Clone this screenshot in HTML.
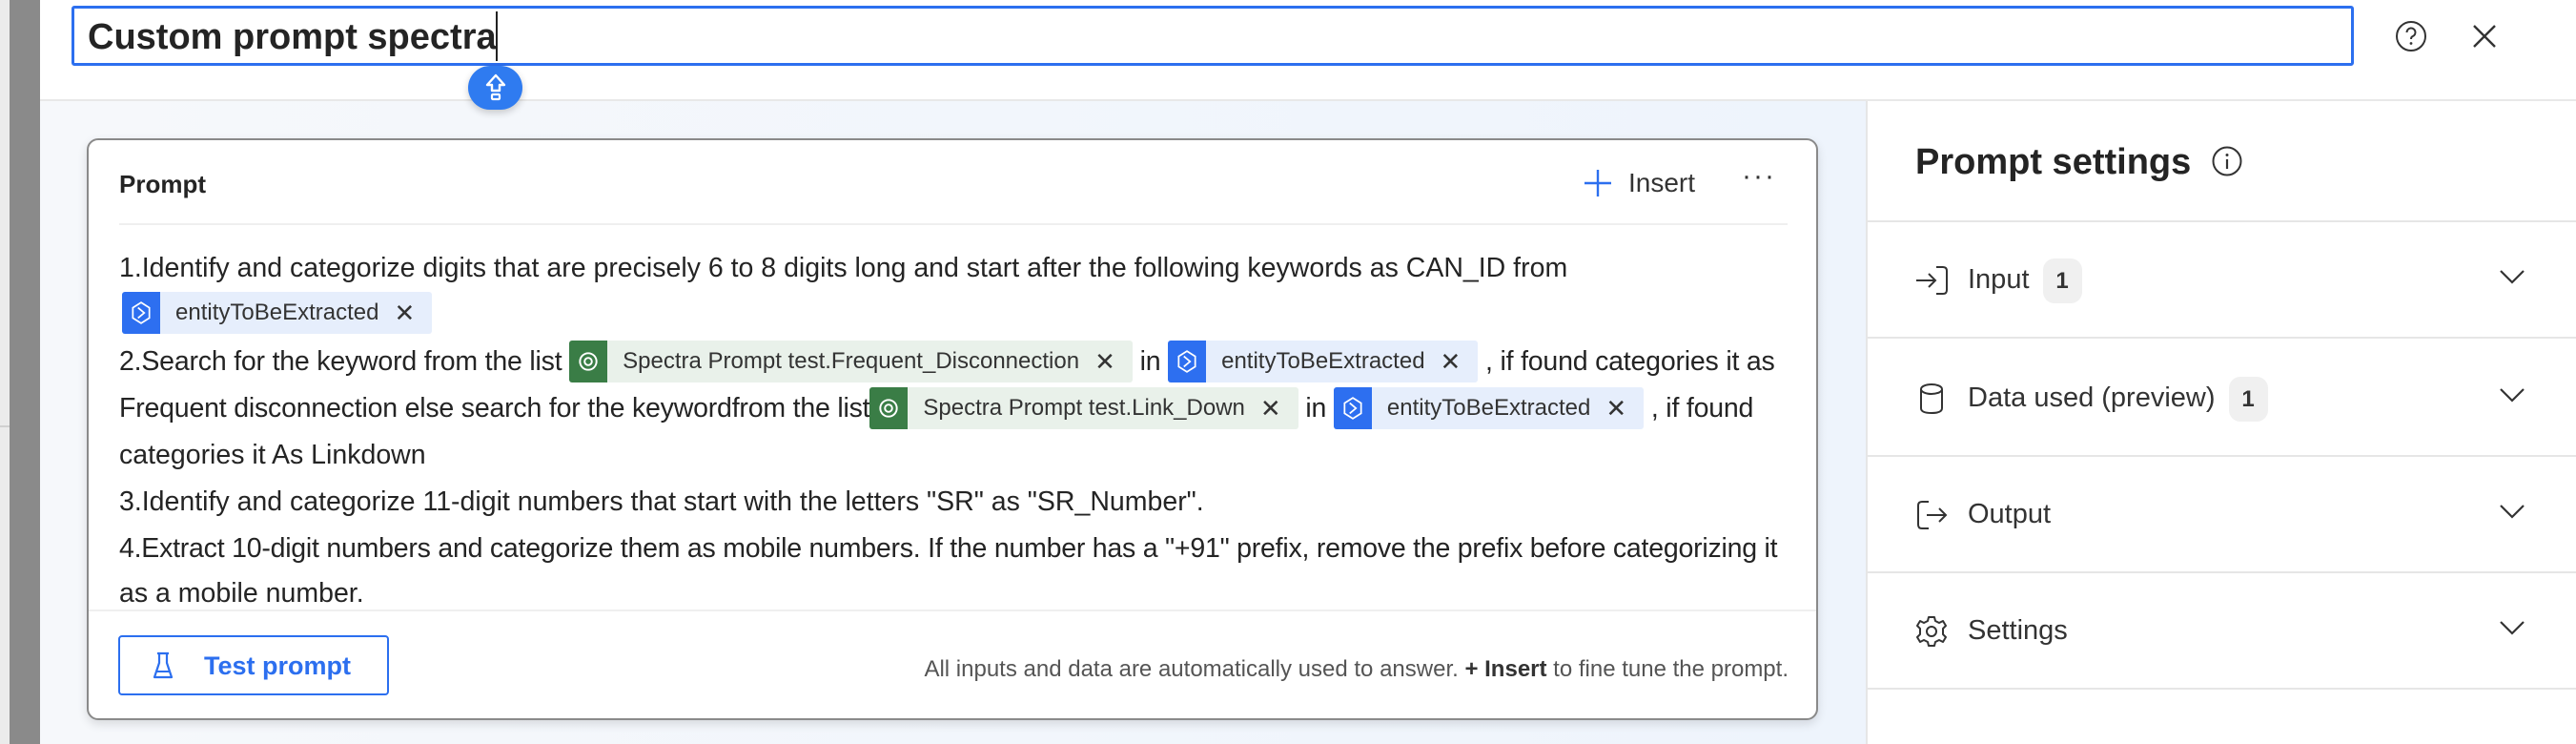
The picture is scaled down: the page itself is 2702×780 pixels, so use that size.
<!DOCTYPE html>
<html><head><meta charset="utf-8">
<style>
*{margin:0;padding:0;box-sizing:border-box}
body{width:2702px;height:780px;overflow:hidden;background:#fff;font-family:"Liberation Sans",sans-serif;color:#242424;position:relative}
.abs{position:absolute}
.line{position:absolute;left:125px;height:44px;line-height:44px;font-size:28.5px;white-space:nowrap;color:#242424}
.chip{display:inline-flex;align-items:center;height:44px;vertical-align:top;border-radius:3px;overflow:hidden;font-size:24px;letter-spacing:0}
.chip .ic{width:40px;height:44px;display:flex;align-items:center;justify-content:center}
.chip.b{background:#e6eefc}.chip.b .ic{background:#2d6ff0}
.chip.g{background:#e9f1ea}.chip.g .ic{background:#3a7d46}
.chip .t{padding:0 16px 0 16px;color:#333}
.chip .x{padding-right:18px;font-size:26px;color:#333}
.row{position:absolute;left:1957px;right:0;height:122px;border-bottom:2px solid #e6e6e6}
.row .lab{position:absolute;left:107px;top:0;line-height:120px;font-size:29px;color:#333}
.badge{display:inline-block;width:41px;height:47px;line-height:47px;text-align:center;background:#f0f0f0;border-radius:12px;font-weight:bold;font-size:24px;margin-left:14px;vertical-align:middle}
.row svg.ri{position:absolute;left:52px;top:44px}
.row svg.ch{position:absolute;left:664px;top:48px}
</style></head><body>
<div class="abs" style="left:0;top:0;width:10px;height:780px;background:#ebebeb"></div>
<div class="abs" style="left:0;top:446px;width:10px;height:2px;background:#d0d0d0"></div>
<div class="abs" style="left:10px;top:0;width:32px;height:780px;background:#8a8a8a"></div>
<div class="abs" style="left:42px;top:104px;width:2660px;height:2px;background:#e8e8e8"></div>
<div class="abs" style="left:75px;top:6px;width:2394px;height:63px;border:3px solid #2c6fef;border-radius:3px"></div>
<div class="abs" style="left:92px;top:14px;font-size:38px;font-weight:bold;line-height:50px;color:#242424">Custom prompt spectra</div>
<div class="abs" style="left:520px;top:12px;width:2px;height:52px;background:#222"></div>
<svg class="abs" style="left:2512px;top:21px" width="34" height="34" viewBox="0 0 34 34"><circle cx="17" cy="17" r="15" fill="none" stroke="#333" stroke-width="2"/><path d="M12.5 13a4.5 4.5 0 1 1 6 4.2c-1.2.5-1.5 1.3-1.5 2.8" fill="none" stroke="#333" stroke-width="2"/><circle cx="17" cy="24.5" r="1.4" fill="#333"/></svg>
<svg class="abs" style="left:2593px;top:25px" width="26" height="26" viewBox="0 0 26 26"><path d="M2 2L24 24M24 2L2 24" stroke="#333" stroke-width="2.4"/></svg>
<div class="abs" style="left:42px;top:106px;width:1915px;height:674px;background:linear-gradient(90deg,#f6f8fb,#eef4fc)"></div>
<div class="abs" style="left:491px;top:69px;width:57px;height:46px;background:#2f7bf0;border-radius:23px;box-shadow:0 3px 8px rgba(0,0,0,.2)"></div>
<svg class="abs" style="left:505px;top:75px" width="30" height="34" viewBox="0 0 30 34"><path d="M15 4L6 14h5v6h8v-6h5z" fill="none" stroke="#fff" stroke-width="2.4" stroke-linejoin="round"/><rect x="11" y="24" width="8" height="5" rx="1" fill="none" stroke="#fff" stroke-width="2.2"/></svg>
<div class="abs" style="left:91px;top:145px;width:1816px;height:610px;background:#fff;border:2px solid #8a8a8a;border-radius:12px;box-shadow:0 4px 10px rgba(0,0,0,.12)"></div>
<div class="abs" style="left:125px;top:176px;font-size:26px;font-weight:bold;line-height:34px">Prompt</div>
<div class="abs" style="left:125px;top:234px;width:1750px;height:2px;background:#efefef"></div>
<svg class="abs" style="left:1661px;top:177px" width="30" height="30" viewBox="0 0 30 30"><path d="M15 1V29M1 15H29" stroke="#2c6fef" stroke-width="2.4"/></svg>
<div class="abs" style="left:1708px;top:175px;font-size:28px;line-height:34px;color:#333">Insert</div>
<div class="abs" style="left:1827px;top:168px;font-size:30px;line-height:34px;color:#333;letter-spacing:2px">···</div>
<svg width="0" height="0" style="position:absolute"><defs>
<symbol id="bi" viewBox="0 0 24 24"><path d="M12 2L20 7V17L12 22L4 17V7Z" fill="none" stroke="#fff" stroke-width="1.6"/><path d="M9 7L15 12L9 17" fill="none" stroke="#fff" stroke-width="1.6"/></symbol>
<symbol id="gi" viewBox="0 0 24 24"><circle cx="12" cy="12" r="8" fill="none" stroke="#fff" stroke-width="1.8"/><circle cx="12" cy="12" r="3.5" fill="none" stroke="#fff" stroke-width="1.8"/></symbol>
</defs></svg>
<div class="line" style="top:259px">1.Identify and categorize digits that are precisely 6 to 8 digits long and start after the following keywords as CAN_ID from</div>
<div class="line" style="top:306px;left:128px"><span class="chip b"><span class="ic"><svg width="26" height="26"><use href="#bi"/></svg></span><span class="t">entityToBeExtracted</span><span class="x">✕</span></span></div>
<div class="line" style="top:357px;letter-spacing:-0.2px">2.Search for the keyword from the list <span class="chip g"><span class="ic"><svg width="26" height="26"><use href="#gi"/></svg></span><span class="t">Spectra Prompt test.Frequent_Disconnection</span><span class="x">✕</span></span> in <span class="chip b"><span class="ic"><svg width="26" height="26"><use href="#bi"/></svg></span><span class="t">entityToBeExtracted</span><span class="x">✕</span></span> , if found categories it as</div>
<div class="line" style="top:406px;letter-spacing:-0.2px">Frequent disconnection else search for the keywordfrom the list<span class="chip g"><span class="ic"><svg width="26" height="26"><use href="#gi"/></svg></span><span class="t">Spectra Prompt test.Link_Down</span><span class="x">✕</span></span> in <span class="chip b"><span class="ic"><svg width="26" height="26"><use href="#bi"/></svg></span><span class="t">entityToBeExtracted</span><span class="x">✕</span></span> , if found</div>
<div class="line" style="top:455px">categories it As Linkdown</div>
<div class="line" style="top:504px">3.Identify and categorize 11-digit numbers that start with the letters "SR" as "SR_Number".</div>
<div class="line" style="top:553px;letter-spacing:-0.23px">4.Extract 10-digit numbers and categorize them as mobile numbers. If the number has a "+91" prefix, remove the prefix before categorizing it</div>
<div class="line" style="top:600px">as a mobile number.</div>
<div class="abs" style="left:93px;top:639px;width:1812px;height:2px;background:#efefef"></div>
<div class="abs" style="left:124px;top:666px;width:284px;height:63px;border:2px solid #2c6fef;border-radius:4px"></div>
<svg class="abs" style="left:160px;top:683px" width="22" height="30" viewBox="0 0 22 30"><path d="M5 2H17M7 2V12L2 27H20L15 12V2" fill="none" stroke="#2c6fef" stroke-width="2.2" stroke-linejoin="round"/><path d="M4 21H18" stroke="#2c6fef" stroke-width="2"/></svg>
<div class="abs" style="left:214px;top:680px;font-size:27px;font-weight:bold;color:#2c6fef;line-height:36px">Test prompt</div>
<div class="abs" style="left:900px;top:687px;width:976px;text-align:right;font-size:24px;color:#555;line-height:30px;white-space:nowrap">All inputs and data are automatically used to answer. <b style="color:#333">+ Insert</b> to fine tune the prompt.</div>
<div class="abs" style="left:1957px;top:106px;width:2px;height:674px;background:#e6e6e6"></div>
<div class="abs" style="left:2009px;top:145px;font-size:38px;font-weight:bold;line-height:50px;color:#242424">Prompt settings</div>
<svg class="abs" style="left:2320px;top:153px" width="32" height="32" viewBox="0 0 32 32"><circle cx="16" cy="16" r="14.5" fill="none" stroke="#333" stroke-width="2"/><path d="M16 14V24" stroke="#333" stroke-width="2.2"/><circle cx="16" cy="9.5" r="1.5" fill="#333"/></svg>
<div class="abs" style="left:1959px;top:231px;width:743px;height:2px;background:#e6e6e6"></div>
<div class="row" style="top:233px"><svg class="ri" width="34" height="34" viewBox="0 0 34 34"><path d="M1 17H21M14 10L21 17L14 24" fill="none" stroke="#333" stroke-width="2"/><path d="M22 3H29Q33 3 33 7V27Q33 31 29 31H22" fill="none" stroke="#333" stroke-width="2"/></svg><div class="lab">Input<span class="badge">1</span></div><svg class="ch" width="28" height="18" viewBox="0 0 28 18"><path d="M2 3L14 15L26 3" fill="none" stroke="#333" stroke-width="2.2"/></svg></div>
<div class="row" style="top:357px"><svg class="ri" width="34" height="34" viewBox="0 0 34 34"><ellipse cx="17" cy="7" rx="11" ry="5" fill="none" stroke="#333" stroke-width="2"/><path d="M6 7V27Q6 32 17 32Q28 32 28 27V7" fill="none" stroke="#333" stroke-width="2"/></svg><div class="lab">Data used (preview)<span class="badge">1</span></div><svg class="ch" width="28" height="18" viewBox="0 0 28 18"><path d="M2 3L14 15L26 3" fill="none" stroke="#333" stroke-width="2.2"/></svg></div>
<div class="row" style="top:479px"><svg class="ri" width="34" height="34" viewBox="0 0 34 34"><path d="M14 3H7Q3 3 3 7V27Q3 31 7 31H14" fill="none" stroke="#333" stroke-width="2"/><path d="M12 17H32M25 10L32 17L25 24" fill="none" stroke="#333" stroke-width="2"/></svg><div class="lab">Output</div><svg class="ch" width="28" height="18" viewBox="0 0 28 18"><path d="M2 3L14 15L26 3" fill="none" stroke="#333" stroke-width="2.2"/></svg></div>
<div class="row" style="top:601px"><svg class="ri" width="34" height="34" viewBox="0 0 34 34"><path d="M14 2H20L21 6L25 8L29 6L32 11L29 14V20L32 23L29 28L25 26L21 28L20 32H14L13 28L9 26L5 28L2 23L5 20V14L2 11L5 6L9 8L13 6Z" fill="none" stroke="#333" stroke-width="2" stroke-linejoin="round"/><circle cx="17" cy="17" r="5" fill="none" stroke="#333" stroke-width="2"/></svg><div class="lab">Settings</div><svg class="ch" width="28" height="18" viewBox="0 0 28 18"><path d="M2 3L14 15L26 3" fill="none" stroke="#333" stroke-width="2.2"/></svg></div>
</body></html>
